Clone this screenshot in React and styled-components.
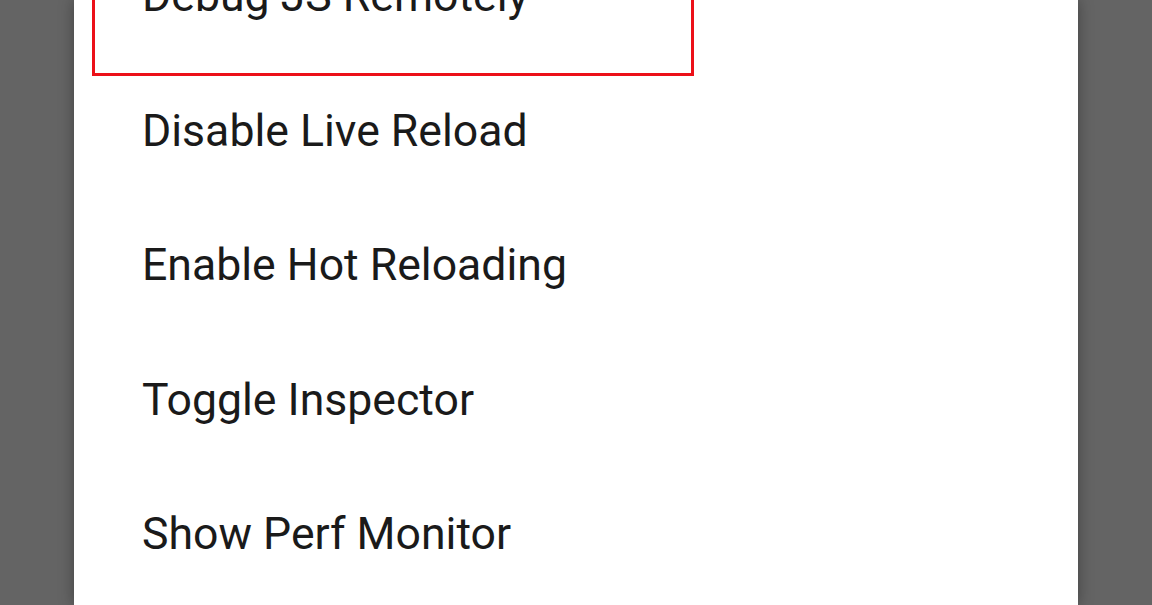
import React from 'react';
import styled, { createGlobalStyle } from 'styled-components';

const GlobalStyle = createGlobalStyle`
	html, body {
		margin: 0;
		padding: 0;
		background: #646464;
		overflow: hidden;
	}
`;

const Screen = styled.div`
	height: 605px;
	width: 1152px;
	display: flex;
	justify-content: center;
	background: #646464;
`;

const Sheet = styled.div`
	width: 1004px;
	height: 100%;
	background: #ffffff;
	box-shadow: 0 0 14px rgba(0, 0, 0, 0.35);
	overflow: hidden;
`;

const MenuList = styled.div`
	display: flex;
	flex-direction: column;
	margin-top: -71px;
`;

const MenuItem = styled.div`
	position: relative;
	height: 134.5px;
	display: flex;
	align-items: center;
	padding-left: 68px;
	font-family: Roboto, "Liberation Sans", sans-serif;
	font-size: 44.6px;
	color: #1a1a1a;
`;

const Highlight = styled.div`
	position: absolute;
	left: 18px;
	width: 602px;
	top: 0;
	bottom: -12px;
	border: 3.5px solid #ec1018;
	box-sizing: border-box;
`;

const items = [
	'Debug JS Remotely',
	'Disable Live Reload',
	'Enable Hot Reloading',
	'Toggle Inspector',
	'Show Perf Monitor',
];

export default function App() {
	return (
		<Screen>
			<GlobalStyle />
			<Sheet>
				<MenuList>
					{items.map((label, i) => (
						<MenuItem key={label}>
							{i === 0 && <Highlight />}
							{label}
						</MenuItem>
					))}
				</MenuList>
			</Sheet>
		</Screen>
	);
}
